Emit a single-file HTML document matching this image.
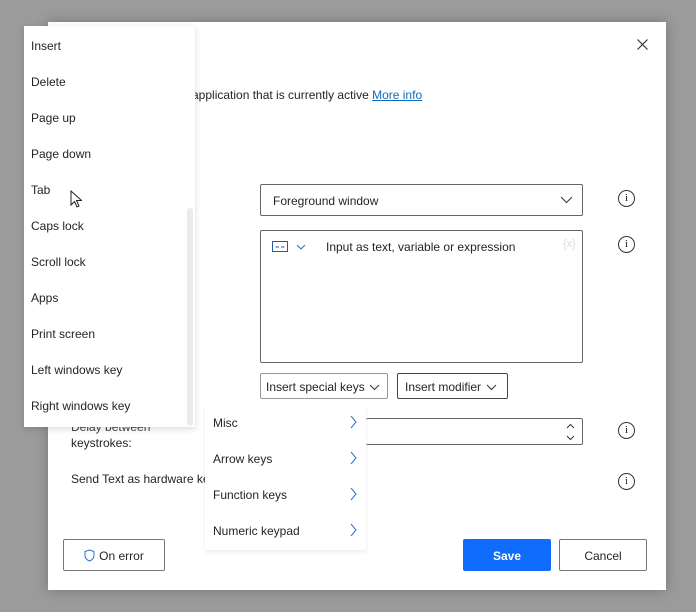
<!DOCTYPE html>
<html><head><style>
*{box-sizing:border-box;margin:0;padding:0}
body{width:696px;height:612px;background:#9b9b9b;font-family:"Liberation Sans",sans-serif;font-size:12px;color:#252423;position:relative;overflow:hidden}
.dlg{position:absolute;left:48px;top:22px;width:618px;height:568px;background:#fff;box-shadow:0 0 12px rgba(0,0,0,.25)}
.a{position:absolute;white-space:nowrap}
.box{position:absolute;border:1px solid #666;border-radius:2px;background:#fff}
.info{position:absolute;width:17px;height:17px;border:1.2px solid #333;border-radius:50%;font-size:11px;text-align:center;line-height:15px;font-family:"Liberation Serif",serif}
.menu{position:absolute;left:24px;top:26px;width:171px;height:401px;background:#fff;box-shadow:0 2px 6px rgba(0,0,0,.15)}
.menu div{position:absolute;left:7px}
.sub{position:absolute;left:205px;top:405px;width:161px;height:145px;background:#fff;box-shadow:0 2px 4px rgba(0,0,0,.08)}
.sub div{position:absolute;left:8px}
.chev{position:absolute;right:9px}
.btn{position:absolute;border:1px solid #777;border-radius:2px;background:#fff;text-align:center;white-space:nowrap}
</style></head><body>
<div class="dlg">
<svg class="a" style="left:589px;top:17px" width="11" height="11"><path d="M0.5 0.5l10 10M10.5 0.5l-10 10" stroke="#333" stroke-width="1.2"/></svg>
<div class="a" style="left:144px;top:66px">application that is currently active <span style="color:#0f6cbd;text-decoration:underline">More info</span></div>
<div class="box" style="left:212px;top:162px;width:323px;height:32px"><span class="a" style="left:12px;top:9px">Foreground window</span><svg class="a" style="right:9px;top:11px" width="13" height="8"><path d="M1 1l5.5 5.5 5.5-5.5" stroke="#333" fill="none"/></svg></div>
<div class="info" style="left:570px;top:168px">i</div>
<div class="box" style="left:212px;top:208px;width:323px;height:133px">
<svg class="a" style="left:11px;top:10px" width="36" height="12"><rect x="0.5" y="0.5" width="15" height="10" fill="none" stroke="#2a56a8"/><path d="M3.5 6h3.5M9 6h3.5" stroke="#2a56a8"/><path d="M25 4l4 4 4-4" stroke="#2b6fd6" fill="none"/></svg>
<span class="a" style="left:65px;top:9px">Input as text, variable or expression</span>
<span class="a" style="left:302px;top:7px;color:#ddd;font-size:11px">{x}</span></div>
<div class="info" style="left:570px;top:214px">i</div>
<div class="btn" style="left:212px;top:351px;width:128px;height:26px;border-color:#999;text-align:left;padding:6px 5px">Insert special keys<svg width="11" height="7" style="margin-left:4px"><path d="M1 1l4.5 4.5 4.5-4.5" stroke="#333" fill="none"/></svg></div>
<div class="btn" style="left:349px;top:351px;width:111px;height:26px;border-color:#444;text-align:left;padding:6px 7px">Insert modifier<svg width="11" height="7" style="margin-left:5px"><path d="M1 1l4.5 4.5 4.5-4.5" stroke="#333" fill="none"/></svg></div>
<div class="a" style="left:23px;top:398px;color:#444">Delay between</div>
<div class="a" style="left:23px;top:414px">keystrokes:</div>
<div class="box" style="left:318px;top:396px;width:217px;height:27px;border-left:none"><svg class="a" style="right:7px;top:4px" width="9" height="18"><path d="M1 5l3.5-3.5 3.5 3.5M1 13l3.5 3.5 3.5-3.5" stroke="#333" fill="none"/></svg></div>
<div class="info" style="left:570px;top:400px">i</div>
<div class="a" style="left:23px;top:450px">Send Text as hardware ke</div>
<div class="info" style="left:570px;top:451px">i</div>
<div class="btn" style="left:15px;top:517px;width:102px;height:32px;padding-top:9px"><svg width="11" height="13" style="vertical-align:-2px;margin-right:4px"><path d="M5.5 1l4.5 1.5v4c0 3-2 4.5-4.5 5.5-2.5-1-4.5-2.5-4.5-5.5v-4z" stroke="#2b6fd6" fill="none"/></svg>On error</div>
<div class="btn" style="left:415px;top:517px;width:88px;height:32px;background:#0f6cfd;border-color:#0f6cfd;color:#fff;font-weight:bold;padding-top:9px">Save</div>
<div class="btn" style="left:511px;top:517px;width:88px;height:32px;padding-top:9px">Cancel</div>
</div>
<div class="menu">
<div style="top:13px">Insert</div><div style="top:49px">Delete</div><div style="top:85px">Page up</div><div style="top:121px">Page down</div><div style="top:157px">Tab</div><div style="top:193px">Caps lock</div><div style="top:229px">Scroll lock</div><div style="top:265px">Apps</div><div style="top:301px">Print screen</div><div style="top:337px">Left windows key</div><div style="top:373px">Right windows key</div>
<span style="position:absolute;left:163px;top:182px;width:6px;height:218px;background:#eceaec;border-radius:3px"></span>
</div>
<svg class="a" style="left:70px;top:190px" width="12" height="19"><path d="M1 1v14l3.5-3.5 2.5 5.5 2-1-2.5-5.5h5z" fill="#fff" stroke="#222"/></svg>
<div class="sub">
<div style="top:11px">Misc</div><svg class="chev" style="top:10px" width="7" height="14"><path d="M1 1l5 6-5 6" stroke="#2b6fd6" fill="none"/></svg>
<div style="top:47px">Arrow keys</div><svg class="chev" style="top:46px" width="7" height="14"><path d="M1 1l5 6-5 6" stroke="#2b6fd6" fill="none"/></svg>
<div style="top:83px">Function keys</div><svg class="chev" style="top:82px" width="7" height="14"><path d="M1 1l5 6-5 6" stroke="#2b6fd6" fill="none"/></svg>
<div style="top:119px">Numeric keypad</div><svg class="chev" style="top:118px" width="7" height="14"><path d="M1 1l5 6-5 6" stroke="#2b6fd6" fill="none"/></svg>
</div>
</body></html>
